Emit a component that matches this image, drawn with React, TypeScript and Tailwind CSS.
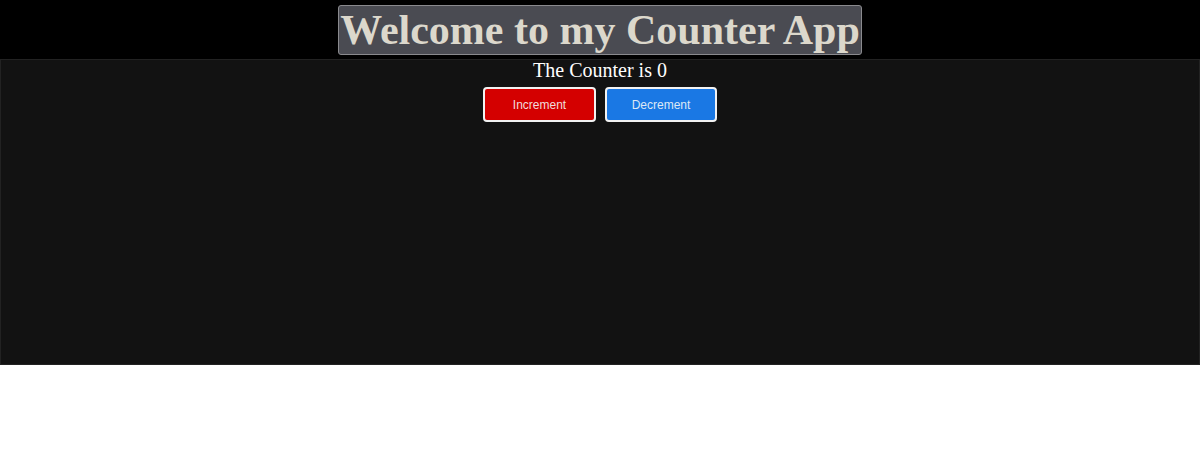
import { useState } from "react";

export default function App() {
  const [count, setCount] = useState(0);

  return (
    <div className="w-full">
      {/* Title bar */}
      <header className="bg-black flex justify-center pt-[5px] pb-[4px]">
        <h1
          className="bg-[#4a4b52] text-[#dcd8cc] border border-[#8a8a8e] rounded-[3px] px-[1px] text-[42px] font-bold leading-[48px]"
          style={{ fontFamily: '"Liberation Serif", "Times New Roman", serif' }}
        >
          Welcome to my Counter App
        </h1>
      </header>

      {/* Counter panel */}
      <main className="bg-[#121212] border border-[#222] h-[306px] flex flex-col items-center">
        <p
          className="text-white text-[20px] leading-[22px] -mt-[1px]"
          style={{ fontFamily: '"Liberation Serif", "Times New Roman", serif' }}
        >
          The Counter is {count}
        </p>
        <div className="flex gap-[9px] mt-[6px]">
          <button
            onClick={() => setCount(count + 1)}
            className="w-[113px] h-[35px] bg-[#d40000] text-[#f0dcdc] border-2 border-[#f2f2f2] rounded-[4px] text-[12px]"
            style={{ fontFamily: '"Liberation Sans", Arial, sans-serif' }}
          >
            Increment
          </button>
          <button
            onClick={() => setCount(count - 1)}
            className="w-[112px] h-[35px] bg-[#1a78e4] text-[#dde8f5] border-2 border-[#f2f2f2] rounded-[4px] text-[12px]"
            style={{ fontFamily: '"Liberation Sans", Arial, sans-serif' }}
          >
            Decrement
          </button>
        </div>
      </main>
    </div>
  );
}
